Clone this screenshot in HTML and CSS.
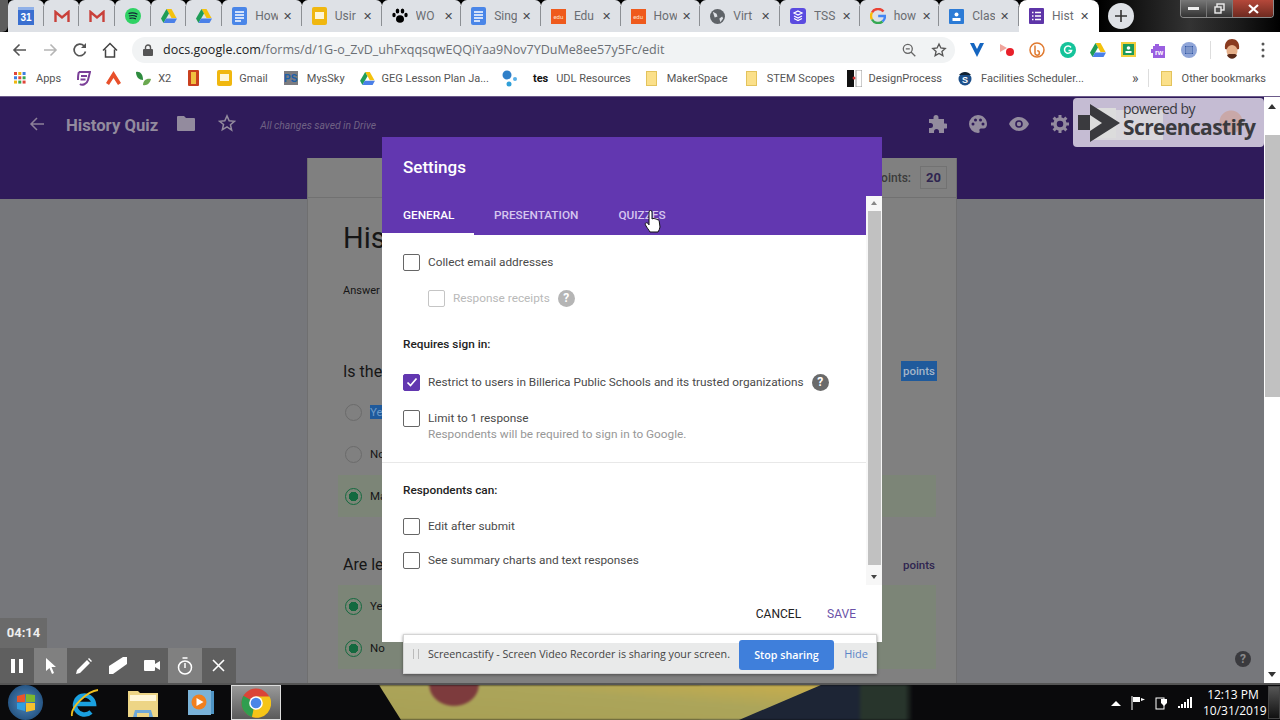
FILE: index.html
```html
<!DOCTYPE html>
<html lang="en">
<head>
    <meta charset="UTF-8">
    <title>History Quiz - Google Forms</title>
    <link rel="stylesheet" href="styles.css">
</head>
<body>
    <div class="tabstrip">
        <div class="strip-edge"></div>
        <div class="tab pinned"><svg width="16" height="18" viewBox="0 0 16 18"><rect width="16" height="18" fill="#3a6fd0"/><rect y="0" width="16" height="3" fill="#8fb0e8"/><text x="8" y="14" class="cal-num">31</text></svg></div>
        <div class="tab pinned"><svg width="16" height="13" viewBox="0 0 16 13"><path d="M1.5 12V2l6.5 5.5L14.500 2v10" fill="none" stroke="#c9403a" stroke-width="2.400"/></svg></div>
        <div class="tab pinned"><svg width="16" height="13" viewBox="0 0 16 13"><path d="M1.5 12V2l6.500 5.500L14.500 2v10" fill="none" stroke="#c9403a" stroke-width="2.400"/></svg></div>
        <div class="tab pinned"><svg width="16" height="16" viewBox="0 0 16 16"><circle cx="8" cy="8" r="8" fill="#2fd264"/><path d="M3.500 5.500c3-1 6-.8 9 .7M4 8c2.600-.8 5.200-.6 7.800.6M4.500 10.400c2.200-.6 4.400-.5 6.400.5" fill="none" stroke="#123" stroke-width="1.200"/></svg></div>
        <div class="tab pinned"><svg class="drive" width="16" height="14" viewBox="0 0 16 14"><path d="M5.500 0h5l5 9h-5z" fill="#f4c20d"/><path d="M5.500 0L0 9.500 2.500 14l5.500-9.500z" fill="#1f9d57"/><path d="M2.500 14h11L16 9.500H5z" fill="#4a80e8"/></svg></div>
        <div class="tab pinned"><svg class="drive" width="16" height="14" viewBox="0 0 16 14"><path d="M5.500 0h5l5 9h-5z" fill="#f4c20d"/><path d="M5.500 0L0 9.500 2.500 14l5.500-9.500z" fill="#1f9d57"/><path d="M2.500 14h11L16 9.500H5z" fill="#4a80e8"/></svg></div>

        <div class="tab"><svg width="15" height="18" viewBox="0 0 15 18"><rect width="15" height="18" rx="2" fill="#4a86e8"/><path d="M3 5h9M3 8h9M3 11h9M3 14h6" stroke="#fff" stroke-width="1.500"/></svg><span class="tab-title">How</span><span class="tab-x">✕</span></div>
        <div class="tab"><svg width="15" height="18" viewBox="0 0 15 18"><rect width="15" height="18" rx="2" fill="#f0b70f"/><rect x="3" y="5" width="9" height="7" fill="#fdf6d8"/></svg><span class="tab-title">Usir</span><span class="tab-x">✕</span></div>
        <div class="tab"><svg width="16" height="16" viewBox="0 0 16 16"><ellipse cx="8" cy="11" rx="4" ry="3.800"/><ellipse cx="2" cy="7" rx="1.700" ry="2.300"/><ellipse cx="5.500" cy="3" rx="1.800" ry="2.600"/><ellipse cx="10.500" cy="3" rx="1.800" ry="2.600"/><ellipse cx="14" cy="7" rx="1.700" ry="2.300"/></svg><span class="tab-title">WO</span><span class="tab-x">✕</span></div>
        <div class="tab"><svg width="15" height="18" viewBox="0 0 15 18"><rect width="15" height="18" rx="2" fill="#4a86e8"/><path d="M3 5h9M3 8h9M3 11h9M3 14h6" stroke="#fff" stroke-width="1.500"/></svg><span class="tab-title">Sing</span><span class="tab-x">✕</span></div>
        <div class="tab"><div class="edu-icon">edu</div><span class="tab-title">Edu</span><span class="tab-x">✕</span></div>
        <div class="tab"><div class="edu-icon">edu</div><span class="tab-title">How</span><span class="tab-x">✕</span></div>
        <div class="tab"><svg width="15" height="15" viewBox="0 0 16 16"><circle cx="8" cy="8" r="8" fill="#5f6368"/><path d="M3 3l4 2 1 3-3 1zM10 10l3-2 1 2-3 4z" fill="#dee1e6"/></svg><span class="tab-title">Virt</span><span class="tab-x">✕</span></div>
        <div class="tab"><svg width="16" height="16" viewBox="0 0 16 16"><rect width="16" height="16" rx="3" fill="#5b4be0"/><path d="M8 3l4 2-4 2-4-2zM4 8l4 2 4-2M4 10.500l4 2 4-2" fill="none" stroke="#fff" stroke-width="1.200"/></svg><span class="tab-title">TSS</span><span class="tab-x">✕</span></div>
        <div class="tab"><svg width="16" height="16" viewBox="0 0 16 16"><path d="M13.500 3.500A7 7 0 0 0 2 4.500" fill="none" stroke="#ea4335" stroke-width="2.400"/><path d="M2 4.500a7 7 0 0 0 0 7" fill="none" stroke="#fbbc05" stroke-width="2.400"/><path d="M2 11.500a7 7 0 0 0 10.500 2" fill="none" stroke="#34a853" stroke-width="2.400"/><path d="M12.500 13.500A7 7 0 0 0 15 8H8.200" fill="none" stroke="#4285f4" stroke-width="2.400"/></svg><span class="tab-title">how</span><span class="tab-x">✕</span></div>
        <div class="tab"><svg width="15" height="15" viewBox="0 0 15 15"><rect width="15" height="15" rx="1" fill="#2c7bd6"/><circle cx="7.500" cy="5.500" r="2" fill="#fff"/><rect x="3.500" y="9" width="8" height="3" fill="#fff"/></svg><span class="tab-title">Clas</span><span class="tab-x">✕</span></div>
        <div class="tab active"><svg width="15" height="16" viewBox="0 0 15 16"><rect width="15" height="16" rx="1" fill="#5e35a8"/><path d="M3 4.500h1.500M6 4.500h6M3 8h1.500M6 8h6M3 11.500h1.500M6 11.500h6" stroke="#fff" stroke-width="1.500"/></svg><span class="tab-title">Hist</span><span class="tab-x">✕</span></div>
        <div class="new-tab"><svg width="12" height="12" viewBox="0 0 12 12"><path d="M6 0v12M0 6h12" stroke="#333" stroke-width="1.600"/></svg></div>
        <div class="window-buttons">
            <div class="win-btn"><svg width="11" height="4" viewBox="0 0 11 4"><rect width="11" height="3" fill="#eee"/></svg></div>
            <div class="win-btn"><svg width="11" height="11" viewBox="0 0 11 11"><rect x="3" y="1" width="7" height="6" fill="none" stroke="#eee" stroke-width="1.400"/><rect x="1" y="4" width="6" height="6" fill="#555" stroke="#eee" stroke-width="1.400"/></svg></div>
            <div class="win-btn win-close"><svg width="11" height="10" viewBox="0 0 11 10"><path d="M1 1l9 8M10 1l-9 8" stroke="#fff" stroke-width="2.200"/></svg></div>
        </div>
    </div>

    <div class="toolbar">
        <svg class="nav-icon" width="18" height="18" viewBox="0 0 18 18"><path d="M15 9H3M8.500 3.500L3 9l5.500 5.500" fill="none" stroke="#555" stroke-width="1.600"/></svg>
        <svg class="nav-icon" width="18" height="18" viewBox="0 0 18 18"><path d="M3 9h12M9.500 3.500L15 9l-5.500 5.500" fill="none" stroke="#b5b5b5" stroke-width="1.600"/></svg>
        <svg class="nav-icon" width="18" height="18" viewBox="0 0 18 18"><path d="M14.500 10.500A5.800 5.800 0 1 1 13 4.800" fill="none" stroke="#555" stroke-width="1.700"/><path d="M15 2v5h-5z" fill="#555"/></svg>
        <svg class="nav-icon" width="18" height="18" viewBox="0 0 18 18"><path d="M2 9.500L9 2.500l7 7M4.500 8.500V16h9V8.500" fill="none" stroke="#444" stroke-width="1.500"/></svg>
        <div class="omnibox">
            <svg width="10" height="12" viewBox="0 0 10 12"><rect y="5" width="10" height="7" rx="1" fill="#555"/><path d="M2.500 5V3.500a2.500 2.500 0 0 1 5 0V5" fill="none" stroke="#555" stroke-width="1.400"/></svg>
            <div class="url"><span class="url-host">docs.google.com</span>/forms/d/1G-o_ZvD_uhFxqqsqwEQQiYaa9Nov7YDuMe8ee57y5Fc/edit</div>
            <svg width="14" height="14" viewBox="0 0 14 14"><circle cx="5.800" cy="5.800" r="4.500" fill="none" stroke="#666" stroke-width="1.300"/><path d="M9 9l4.300 4.300M3.800 5.800h4" stroke="#666" stroke-width="1.300"/></svg>
            <svg class="omni-star" width="16" height="16" viewBox="0 0 24 24"><path d="M12 3l2.800 6 6.500.7-4.900 4.400 1.400 6.400L12 17.200 6.200 20.500l1.400-6.400-4.900-4.400 6.500-.7z" fill="none" stroke="#555" stroke-width="2"/></svg>
        </div>
        <div class="extensions">
            <svg width="14" height="15" viewBox="0 0 14 15"><path d="M0 1l4 0 3 6 3-6 4 0-5 10-2 4-2-4z" fill="#1565c0"/></svg>
            <svg width="16" height="15" viewBox="0 0 16 15"><path d="M1 2l7 4-7 4z" fill="#f0a59c"/><circle cx="11" cy="10" r="4" fill="#e8202a"/></svg>
            <svg width="16" height="16" viewBox="0 0 16 16"><circle cx="8" cy="8" r="7" fill="none" stroke="#e07a30" stroke-width="1.500"/><path d="M6 3.500V11a2.200 2.200 0 1 0 2.200-2.200" fill="none" stroke="#e07a30" stroke-width="1.500"/></svg>
            <svg width="16" height="16" viewBox="0 0 16 16"><circle cx="8" cy="8" r="8" fill="#15c39a"/><path d="M11 5.500a3.600 3.600 0 1 0 .6 3H8.500" fill="none" stroke="#fff" stroke-width="1.500"/></svg>
            <svg class="drive" width="16" height="14" viewBox="0 0 16 14"><path d="M5.500 0h5l5 9h-5z" fill="#f4c20d"/><path d="M5.500 0L0 9.500 2.500 14l5.500-9.500z" fill="#1f9d57"/><path d="M2.500 14h11L16 9.500H5z" fill="#4a80e8"/></svg>
            <svg width="15" height="15" viewBox="0 0 15 15"><rect width="15" height="15" fill="#f3cf3e"/><rect x="2" y="2" width="11" height="11" fill="#1c9a5b"/><circle cx="7.500" cy="6" r="1.800" fill="#fff"/><rect x="4.500" y="9" width="6" height="2" fill="#fff"/></svg>
            <svg width="16" height="16" viewBox="0 0 16 16"><path d="M5 2h4v2h6v12H3V11H1V7h2V4h2z" fill="#9a5fe0"/><text x="9" y="13" class="rw-text">rw</text></svg>
            <svg width="16" height="16" viewBox="0 0 16 16"><circle cx="8" cy="8" r="8" fill="#8fa5d8"/><rect x="4" y="4" width="8" height="8" fill="#2f55a4"/><path d="M6 4v8M8 4v8M10 4v8M4 6h8M4 8h8M4 10h8" stroke="#cdd8f0" stroke-width=".6"/></svg>
            <div class="ext-sep"></div>
            <svg class="avatar" width="18" height="21" viewBox="0 0 18 21"><path d="M2 10C1 3 5 0 9 0s8 3 7 10c-1 1-13 1-14 0z" fill="#8a3a1e"/><ellipse cx="9" cy="12" rx="5.500" ry="6" fill="#e6b08a"/><path d="M4 16c2 5 8 5 10 0l-2-1H6z" fill="#5a2a18"/></svg>
            <svg class="menu-dots" width="4" height="16" viewBox="0 0 4 16"><circle cx="2" cy="2" r="1.500" fill="#555"/><circle cx="2" cy="8" r="1.500" fill="#555"/><circle cx="2" cy="14" r="1.500" fill="#555"/></svg>
        </div>
    </div>

    <div class="bookmarks">
        <div class="bm bm-apps"><svg width="12" height="12" viewBox="0 0 14 14"><rect width="3.500" height="3.500" fill="#e0463a"/><rect x="5" width="3.500" height="3.500" fill="#f0b70f"/><rect x="10" width="3.500" height="3.500" fill="#3a7ee0"/><rect y="5" width="3.500" height="3.500" fill="#3a7ee0"/><rect x="5" y="5" width="3.500" height="3.500" fill="#e0463a"/><rect x="10" y="5" width="3.500" height="3.500" fill="#34a853"/><rect y="10" width="3.500" height="3.500" fill="#f0b70f"/><rect x="5" y="10" width="3.500" height="3.500" fill="#34a853"/><rect x="10" y="10" width="3.500" height="3.500" fill="#e0463a"/></svg>Apps</div>
        <div class="bm bm-s1"><svg width="15" height="15" viewBox="0 0 15 15"><path d="M3 1h11l-2 8c-1 4-6 6-8 4M2 9c0-3 0-6 1-8M5 5h6M4.500 8.500h5" fill="none" stroke="#7b3f98" stroke-width="2"/></svg></div>
        <div class="bm bm-s2"><svg width="15" height="14" viewBox="0 0 15 14"><path d="M7.500 0L15 12l-3 2-4.500-7L3 14l-3-2z" fill="#e8502a"/></svg></div>
        <div class="bm bm-x2"><svg width="15" height="16" viewBox="0 0 15 16"><path d="M0 2c4-1 7 2 7 8C3 10 0 7 0 2z" fill="#2e8b3f"/><path d="M7 15c0-4 3-7 8-6-1 4-4 7-8 6z" fill="#6aa84f"/></svg>X2</div>
        <div class="bm bm-s3"><svg width="11" height="16" viewBox="0 0 11 16"><rect width="11" height="16" rx="1" fill="#c9401f"/><rect x="3" y="2" width="5" height="12" fill="#f0c040"/></svg></div>
        <div class="bm bm-gmail"><svg width="15" height="16" viewBox="0 0 15 16"><rect width="15" height="16" rx="2" fill="#f0b70f"/><rect x="3" y="4" width="9" height="7" fill="#fdf6d8"/></svg>Gmail</div>
        <div class="bm bm-mys"><svg width="14" height="14" viewBox="0 0 14 14"><rect width="14" height="14" fill="#7c7c80"/><text x="0" y="11" class="ps-text">PS</text></svg>MysSky</div>
        <div class="bm bm-geg"><svg class="drive" width="15" height="13" viewBox="0 0 16 14"><path d="M5.500 0h5l5 9h-5z" fill="#f4c20d"/><path d="M5.500 0L0 9.500 2.500 14l5.500-9.500z" fill="#1f9d57"/><path d="M2.500 14h11L16 9.500H5z" fill="#4a80e8"/></svg>GEG Lesson Plan Ja...</div>
        <div class="bm bm-dots"><svg width="16" height="17" viewBox="0 0 16 17"><circle cx="5" cy="5" r="4.500" fill="#2f7fc8"/><circle cx="13" cy="9" r="2" fill="#58b0e8"/><circle cx="7" cy="14" r="2.500" fill="#2f9fd8"/></svg></div>
        <div class="bm bm-udl"><span class="tes-text">tes</span>UDL Resources</div>
        <div class="bm bm-maker"><span class="folder"></span>MakerSpace</div>
        <div class="bm bm-stem"><span class="folder"></span>STEM Scopes</div>
        <div class="bm bm-design"><svg width="15" height="17" viewBox="0 0 15 17"><rect width="7" height="17" fill="#111"/><rect x="9" width="6" height="17" fill="#fff" stroke="#999"/><circle cx="7" cy="8" r="1.500" fill="#c33"/></svg>DesignProcess</div>
        <div class="bm bm-fac"><svg width="14" height="15" viewBox="0 0 14 15"><circle cx="7" cy="8" r="6.500" fill="#1c4f8a"/><path d="M1 4c3-4 9-4 12 0z" fill="#123"/><text x="7" y="12" class="fs-text">S</text></svg>Facilities Scheduler...</div>
        <div class="bm-more">»</div>
        <div class="bm-sep"></div>
        <div class="bm bm-other"><span class="folder"></span>Other bookmarks</div>
    </div>

    <main class="page">
        <div class="form-area">
            <div class="form-header">
                <div class="header-left">
                    <svg width="16" height="16" viewBox="0 0 16 16"><path d="M15 8H2M8 2L2 8l6 6" fill="none" stroke="#8d8199" stroke-width="1.500"/></svg>
                    <div class="form-title">History Quiz</div>
                    <svg width="18" height="15" viewBox="0 0 18 15"><path d="M1 0h6l2 2h8a1 1 0 0 1 1 1v11a1 1 0 0 1-1 1H1a1 1 0 0 1-1-1V1a1 1 0 0 1 1-1z" fill="#938b9e"/></svg>
                    <svg class="head-star" width="18" height="18" viewBox="0 0 24 24"><path d="M12 2.500l2.900 6.500 7 .7-5.300 4.700 1.600 7L12 17.200l-6.200 3.700 1.600-7L2.100 9.700l7-.7z" fill="none" stroke="#938b9e" stroke-width="2"/></svg>
                    <div class="saved-note">All changes saved in Drive</div>
                </div>
                <div class="header-right">
                    <svg width="18" height="18" viewBox="0 0 18 18"><path d="M7 0a2.500 2.500 0 0 1 2.500 2.500V4H15v4.500h1.500a2.500 2.500 0 0 1 0 5H15V18H10v-1.500a2.500 2.500 0 0 0-5 0V18H0v-5h1.500a2.500 2.500 0 0 0 0-5H0V4h4.500V2.500A2.500 2.500 0 0 1 7 0z" fill="#938b9e"/></svg>
                    <svg width="18" height="18" viewBox="0 0 18 18"><path d="M9 0a9 9 0 1 0 0 18c1.500 0 2-1 1.500-2-.5-1.200.2-2.500 1.500-2.500h2.500C16.800 13.500 18 11.500 18 9c0-5-4-9-9-9z" fill="#938b9e"/><circle cx="4" cy="9" r="1.500" fill="#2f1b5a"/><circle cx="6.500" cy="5" r="1.500" fill="#2f1b5a"/><circle cx="11.500" cy="5" r="1.500" fill="#2f1b5a"/><circle cx="14" cy="9" r="1.500" fill="#2f1b5a"/></svg>
                    <svg width="20" height="14" viewBox="0 0 20 14"><path d="M10 0C5.500 0 2 3 0 7c2 4 5.500 7 10 7s8-3 10-7c-2-4-5.500-7-10-7z" fill="#938b9e"/><circle cx="10" cy="7" r="3.800" fill="#2f1b5a"/><circle cx="10" cy="7" r="2.200" fill="#938b9e"/></svg>
                    <svg width="18" height="18" viewBox="0 0 18 18"><circle cx="9" cy="9" r="5" fill="none" stroke="#938b9e" stroke-width="3.500"/><path d="M9 0v4M9 14v4M0 9h4M14 9h4M2.600 2.600l2.900 2.900M12.500 12.500l2.900 2.900M2.600 15.400l2.900-2.900M12.500 5.500l2.900-2.900" stroke="#938b9e" stroke-width="3"/></svg>
                </div>
            </div>
            <div class="form-card">
                <div class="card-top">
                    <span class="total-label">oints:</span>
                    <span class="total-box">20</span>
                </div>
                <div class="card-body">
                    <h1 class="quiz-title">His</h1>
                    <div class="quiz-desc">Answer</div>
                    <div class="question-head"><span>Is the</span><span class="points selected">points</span></div>
                    <div class="choice"><span class="radio"></span><span class="selected">Ye</span></div>
                    <div class="choice"><span class="radio"></span><span>No</span></div>
                    <div class="choice correct"><span class="radio on"></span><span>Ma</span></div>
                    <div class="question-head second"><span>Are le</span><span class="points">points</span></div>
                    <div class="choice correct"><span class="radio on"></span><span>Ye</span></div>
                    <div class="choice correct"><span class="radio on"></span><span>No</span></div>
                </div>
            </div>
            <div class="help-dot">?</div>
        </div>
        <div class="page-scroll">
            <div class="scroll-up"></div>
            <div class="scroll-thumb"></div>
            <div class="scroll-down"></div>
        </div>

        <div class="watermark">
            <svg width="42" height="38" viewBox="0 0 42 38"><rect x="0" y="11" width="12" height="15" fill="#3a3a3e"/><rect x="12" y="4" width="26" height="30" fill="#dcdcdc"/><path d="M12 0l30 19-30 19V27l12-8-12-8z" fill="#3a3a3e"/></svg>
            <div class="wm-text">
                <div class="wm-small">powered by</div>
                <div class="wm-big">Screencastify</div>
            </div>
        </div>

        <div class="settings-modal">
            <div class="modal-head">
                <div class="modal-title">Settings</div>
            </div>
            <div class="modal-scrollwrap">
                <div class="modal-content">
                    <div class="modal-tabs">
                        <div class="modal-tab current">GENERAL</div>
                        <div class="modal-tab">PRESENTATION</div>
                        <div class="modal-tab">QUIZZES</div>
                    </div>
                    <div class="modal-rows">
                        <label class="row row-first"><span class="check"></span>Collect email addresses</label>
                        <label class="row row-sub disabled"><span class="check"></span>Response receipts<span class="help light">?</span></label>
                        <div class="row-heading first-heading">Requires sign in:</div>
                        <label class="row row-restrict"><span class="check checked"><svg width="14" height="14" viewBox="0 0 14 14"><path d="M2.500 7.500l3 3 6-7" fill="none" stroke="#fff" stroke-width="1.700"/></svg></span>Restrict to users in Billerica Public Schools and its trusted organizations<span class="help">?</span></label>
                        <label class="row row-limit"><span class="check"></span>Limit to 1 response</label>
                        <div class="row-note">Respondents will be required to sign in to Google.</div>
                        <div class="modal-divider"></div>
                        <div class="row-heading">Respondents can:</div>
                        <label class="row row-edit"><span class="check"></span>Edit after submit</label>
                        <label class="row row-see"><span class="check"></span>See summary charts and text responses</label>
                    </div>
                </div>
                <div class="modal-scroll">
                    <div class="mini-up"></div>
                    <div class="mini-thumb"></div>
                    <div class="mini-down"></div>
                </div>
            </div>
            <div class="modal-actions">
                <span class="act-cancel">CANCEL</span>
                <span class="act-save">SAVE</span>
            </div>
        </div>

        <svg class="cursor-hand" width="18" height="24" viewBox="0 0 18 24"><path d="M5 2a1.500 1.500 0 0 1 3 0v7l1-.5c1-.3 1.500 0 2 .5 1-.3 1.500 0 2 .7 1-.2 2 .3 2.200 1.300L16 17c-.3 2-1 3.500-2 5H6c-1-2-3-4-4.500-7-.5-1-.3-2 .7-2.200.8-.2 1.800.5 2.800 2z" fill="#fff" stroke="#111" stroke-width="1"/></svg>

        <div class="rec-tools">
            <div class="rec-time">04:14</div>
            <div class="rec-buttons">
                <div class="rec-btn"><svg width="12" height="14" viewBox="0 0 12 14"><rect width="4" height="14" fill="#fff"/><rect x="8" width="4" height="14" fill="#fff"/></svg></div>
                <div class="rec-btn lit"><svg width="12" height="16" viewBox="0 0 12 16"><path d="M1 0l10 9H6.500l2.500 6-2 1-2.500-6L1 13z" fill="#fff"/></svg></div>
                <div class="rec-btn"><svg width="16" height="16" viewBox="0 0 16 16"><path d="M0 16l1-4L11 2l3 3L4 15zM12 1l1-1 3 3-1 1z" fill="#fff"/></svg></div>
                <div class="rec-btn"><svg width="18" height="17" viewBox="0 0 18 17"><path d="M0 9L14 0h4v7L4 17H0z" fill="#fff"/></svg></div>
                <div class="rec-btn"><svg width="16" height="11" viewBox="0 0 16 11"><rect width="11" height="11" rx="1" fill="#fff"/><path d="M11 4l5-3v9l-5-3z" fill="#fff"/></svg></div>
                <div class="rec-btn lit"><svg width="16" height="18" viewBox="0 0 16 18"><circle cx="8" cy="10.500" r="6.500" fill="none" stroke="#fff" stroke-width="1.500"/><path d="M5.500 1h5M8 6v5" stroke="#fff" stroke-width="1.500"/></svg></div>
                <div class="rec-btn"><svg width="13" height="13" viewBox="0 0 13 13"><path d="M1 1l11 11M12 1L1 12" stroke="#fff" stroke-width="1.600"/></svg></div>
            </div>
        </div>

        <div class="share-bar">
            <span class="grip"></span>
            <span class="share-msg">Screencastify - Screen Video Recorder is sharing your screen.</span>
            <span class="stop-btn">Stop sharing</span>
            <span class="hide-link">Hide</span>
        </div>
    </main>

    <footer class="taskbar">
        <div class="wall-dark"></div>
        <div class="wall-yellow"></div>
        <div class="start-orb"><svg width="24" height="24" viewBox="0 0 24 24"><path d="M3 5l8-2v8H3z" fill="#e8552a"/><path d="M12 3l9 1v7h-9z" fill="#7cb82f"/><path d="M3 12h8v8l-8-2z" fill="#2f9fe0"/><path d="M12 12h9v7l-9 2z" fill="#f5c12e"/></svg></div>
        <div class="task-app"><svg width="30" height="32" viewBox="0 0 30 32"><path d="M7 17h17a9.500 9.500 0 1 0-3 8" fill="none" stroke="#1aa0e0" stroke-width="4.500"/><path d="M2 29C0 20 18 4 28 3" fill="none" stroke="#f0c020" stroke-width="1.800"/></svg></div>
        <div class="task-app"><svg width="30" height="28" viewBox="0 0 30 28"><path d="M0 2h10l2 2h18v24H0z" fill="#edd586"/><rect x="2" y="6" width="26" height="6" fill="#fff7d8"/><path d="M5 28l2-7h16l2 7h-4v-4H9v4z" fill="#6fa8d8"/></svg></div>
        <div class="task-app"><svg width="26" height="25" viewBox="0 0 26 25"><rect x="4" y="1" width="22" height="23" fill="#4f94c4"/><rect width="23" height="25" fill="#7ab2d8"/><circle cx="11" cy="12" r="7.500" fill="#f07f1f"/><path d="M8.500 8v8l7-4z" fill="#fff"/></svg></div>
        <div class="task-app current-app"><svg width="30" height="30" viewBox="0 0 30 30"><circle cx="15" cy="15" r="14.500" fill="#db4437"/><path d="M15 15L2.400 7.800A14.500 14.500 0 0 0 11 29z" fill="#2f9e4f"/><path d="M15 8.500h13.500A14.500 14.500 0 0 1 11 29z" fill="#f5c518"/><circle cx="15" cy="15" r="6.800" fill="#fff"/><circle cx="15" cy="15" r="5.300" fill="#4a86e8"/></svg></div>
        <div class="tray">
            <svg width="10" height="6" viewBox="0 0 10 6"><path d="M0 6l5-5 5 5z" fill="#fff"/></svg>
            <svg width="14" height="14" viewBox="0 0 14 14"><path d="M1 0v14" stroke="#fff" stroke-width="1"/><path d="M2 1h7v5H2zM10 2l4 1.500L10 5z" fill="#fff"/></svg>
            <svg width="13" height="14" viewBox="0 0 13 14"><rect x="1" y="2" width="8" height="11" fill="none" stroke="#fff"/><path d="M6 3h6v4l-3 3-3-3z" fill="#fff"/></svg>
            <svg width="14" height="11" viewBox="0 0 14 11"><path d="M0 9h2v2H0zM3 7h2v4H3zM6 5h2v6H6zM9 2h2v9H9zM12 0h2v11h-2z" fill="#fff"/></svg>
            <div class="clock"><div>12:13 PM</div><div>10/31/2019</div></div>
            <div class="show-desktop"></div>
        </div>
    </footer>
</body>
</html>
```

FILE: styles.css
```css
* {
    box-sizing: border-box;
}
html, body {
    margin: 0;
    padding: 0;
    width: 1280px;
    height: 720px;
    overflow: hidden;
}
body {
    display: flex;
    flex-direction: column;
    font-family: "Open Sans", "Liberation Sans", sans-serif;
    background: #000;
}

/* tab strip */
.tabstrip {
    height: 32px;
    display: flex;
    align-items: stretch;
    background: linear-gradient(to right, #000 1100px, #333 1190px, #1a1a1a 1240px, #000 1280px);
    flex: none;
    position: relative;
}
.strip-edge {
    width: 8px;
    background: #5d5d5d;
    border-radius: 0 0 6px 0;
}
.tab {
    width: 79.7px;
    background: linear-gradient(#8c8f94, #8c8f94) right 6px / 1px 20px no-repeat, #dee1e6;
    display: flex;
    align-items: center;
    padding-left: 10px;
    border-radius: 6px 6px 0 0;
    font-family: Roboto, sans-serif;
    font-size: 12px;
    color: #6a6d72;
}
.tab.pinned {
    width: 35.7px;
    padding-left: 0;
    justify-content: center;
}
.tab.active {
    background: #fff;
    border-radius: 8px 8px 0 0;
    width: 80px;
}
.tab-title {
    margin-left: 8px;
    width: 23px;
    overflow: hidden;
    white-space: nowrap;
    flex: none;
}
.tab-x {
    margin-left: 5px;
    font-size: 11px;
    color: #45484d;
    flex: none;
}
.cal-num {
    font: bold 10px "Liberation Sans", sans-serif;
    fill: #fff;
    text-anchor: middle;
}
.edu-icon {
    width: 15px;
    height: 15px;
    background: #ef5a1c;
    color: #fde0c8;
    font-size: 6px;
    line-height: 15px;
    text-align: center;
    flex: none;
}
.new-tab {
    width: 26px;
    height: 26px;
    border-radius: 50%;
    background: #dee1e6;
    margin: 3px 0 0 9px;
    display: flex;
    align-items: center;
    justify-content: center;
}
.window-buttons {
    display: flex;
    margin-left: auto;
    margin-right: 6px;
    height: 18px;
    border: 1px solid #8a8a8a;
    border-top: none;
    border-radius: 0 0 4px 4px;
    overflow: hidden;
    width: 94px;
}
.win-btn {
    width: 26px;
    display: flex;
    align-items: center;
    justify-content: center;
    background: linear-gradient(#777, #333);
    border-right: 1px solid #777;
}
.win-close {
    flex: 1;
    border: none;
    background: linear-gradient(#b5483a, #6e2a20);
}

/* address bar */
.toolbar {
    height: 33px;
    background: #fff;
    display: flex;
    align-items: center;
    flex: none;
    padding: 2px 0 0 11px;
}
.nav-icon {
    margin-right: 12px;
    flex: none;
}
.toolbar .nav-icon:nth-child(4) {
    margin-right: 13px;
}
.omnibox {
    width: 823px;
    height: 26px;
    border-radius: 13px;
    background: #f1f3f4;
    display: flex;
    align-items: center;
    padding: 0 7px 0 11px;
    flex: none;
}
.url {
    margin-left: 10px;
    font-size: 12.55px;
    color: #6b6f74;
    white-space: nowrap;
    width: 739px;
    flex: none;
}
.url-host {
    color: #222;
}
.omni-star {
    margin-left: 15px;
}
.extensions {
    display: flex;
    align-items: center;
    gap: 14.5px;
    margin-left: 15px;
}
.ext-sep {
    width: 1px;
    height: 18px;
    background: #ddd;
    margin: 0 -1px 0 -1px;
}
.avatar {
    margin-left: -2px;
}
.menu-dots {
    margin-left: 6px;
}
.rw-text {
    font: bold 7px "Liberation Sans", sans-serif;
    fill: #fff;
    text-anchor: middle;
}

/* bookmarks */
.bookmarks {
    height: 31px;
    background: #fff;
    display: flex;
    align-items: center;
    flex: none;
    font-family: Roboto, sans-serif;
    font-size: 11px;
    color: #555;
    padding: 0 14px 5px 14px;
    white-space: nowrap;
}
.bm {
    display: flex;
    align-items: center;
    gap: 8px;
    flex: none;
}
.bm-apps { gap: 10px; }
.bm-s1 { margin-left: 15px; }
.bm-s2 { margin-left: 15px; }
.bm-x2 { margin-left: 15px; gap: 7px; }
.bm-s3 { margin-left: 17px; }
.bm-gmail { margin-left: 18px; gap: 7px; }
.bm-mys { margin-left: 16px; gap: 9px; }
.bm-geg { margin-left: 15px; gap: 7px; }
.bm-dots { margin-left: 13px; }
.bm-udl { margin-left: 15px; }
.bm-maker { margin-left: 15px; gap: 10px; }
.bm-stem { margin-left: 18px; gap: 10px; }
.bm-design { margin-left: 12px; gap: 7px; }
.bm-fac { margin-left: 16px; gap: 9px; }
.bm-other { margin-left: 12px; gap: 10px; }
.bm-more {
    margin-left: auto;
    font-size: 14px;
    color: #555;
}
.bm-sep {
    width: 1px;
    height: 18px;
    background: #ddd;
    margin-left: 9px;
}
.folder {
    width: 11px;
    height: 15px;
    background: #fbe08a;
    border: 1px solid #e3c35c;
    flex: none;
}
.ps-text {
    font: bold 10px "Liberation Sans", sans-serif;
    fill: #1c5fa8;
}
.fs-text {
    font: bold 9px "Liberation Sans", sans-serif;
    fill: #fff;
    text-anchor: middle;
}
.tes-text {
    font-weight: bold;
    color: #111;
    font-size: 11px;
}

/* page behind the dialog */
.page {
    height: 587px;
    display: flex;
    flex: none;
    position: relative;
    overflow: hidden;
    border-top: 1px solid #6c5b8a;
}
.form-area {
    width: 1264px;
    background: linear-gradient(#2f1b5a 102px, #76777b 102px);
    position: relative;
    flex: none;
}
.form-header {
    display: flex;
    justify-content: space-between;
    height: 61px;
    padding: 9px 195px 0 29px;
}
.header-left {
    display: flex;
    align-items: center;
    height: 36px;
}
.form-title {
    font-family: Roboto, sans-serif;
    font-size: 16.7px;
    font-weight: 700;
    color: #938b9e;
    margin: 2px 0 0 21px;
}
.header-left svg:nth-of-type(2) {
    margin-left: 19px;
    margin-top: -1px;
}
.head-star {
    margin-left: 23px;
    margin-top: -3px;
}
.saved-note {
    font-family: Roboto, sans-serif;
    font-size: 10.3px;
    font-style: italic;
    color: #6f6284;
    margin-left: 24px;
    margin-top: 2px;
}
.header-right {
    display: flex;
    align-items: center;
    gap: 22px;
    height: 36px;
}
.form-card {
    width: 650px;
    height: 526px;
    margin-left: 307px;
    background: #808080;
    border-right: 1px solid #6f6f70;
    border-left: 1px solid #6f6f70;
    font-family: Roboto, sans-serif;
    color: #161616;
}
.card-top {
    height: 40px;
    border-bottom: 1px solid #717171;
    display: flex;
    justify-content: flex-end;
    align-items: center;
    padding-right: 9px;
    font-size: 12px;
    font-weight: 500;
    color: #3b3b3b;
}
.total-box {
    border: 1px solid #727272;
    width: 27px;
    height: 23px;
    line-height: 21px;
    text-align: center;
    margin-left: 9px;
    font-size: 13px;
    font-weight: 700;
    color: #2f2550;
}
.card-body {
    padding: 0 20px 0 35px;
}
.quiz-title {
    margin: 22px 0 0;
    font-size: 29px;
    font-weight: 400;
    line-height: 36px;
}
.quiz-desc {
    font-size: 11px;
    margin-top: 28px;
    line-height: 14px;
}
.question-head {
    display: flex;
    justify-content: space-between;
    font-size: 16px;
    line-height: 20px;
    margin-top: 64px;
    align-items: center;
}
.question-head.second {
    margin-top: 38px;
    margin-bottom: 10px;
}
.points {
    font-size: 11.5px;
    font-weight: 500;
    color: #2f2550;
    margin-right: -1px;
    padding: 0 2px;
}
.points.selected {
    color: #a3b5c8;
    position: relative;
    top: -1px;
}
.selected {
    background: #1f5a9c;
    color: #6e9ac8;
}
.choice {
    display: flex;
    align-items: center;
    height: 42px;
    font-size: 11.5px;
    gap: 8px;
    padding-left: 2px;
}
.question-head + .choice {
    margin-top: 9px;
}
.question-head.second + .choice {
    margin-top: 10px;
}
.choice.correct {
    background: #7c8577;
    margin-left: -5px;
    padding-left: 7px;
}
.radio {
    width: 17px;
    height: 17px;
    border: 1.5px solid #6b6b6b;
    border-radius: 50%;
    flex: none;
}
.radio.on {
    border-color: #14693f;
    background: radial-gradient(circle, #14693f 4.5px, transparent 5px);
}
.help-dot {
    position: absolute;
    left: 1235px;
    top: 554px;
    width: 16px;
    height: 16px;
    border-radius: 50%;
    background: #3a3a3e;
    color: #8b8b8b;
    font-family: Roboto, sans-serif;
    font-size: 12px;
    font-weight: 700;
    line-height: 16px;
    text-align: center;
}
.page-scroll {
    width: 16px;
    background: #fff;
    display: flex;
    flex-direction: column;
    align-items: center;
    flex: none;
}
.scroll-up {
    width: 0;
    height: 0;
    border: 4px solid transparent;
    border-top: none;
    border-bottom: 5px solid #333;
    margin-top: 7px;
}
.scroll-thumb {
    width: 15px;
    height: 262px;
    background: #c1c1c1;
    margin-top: 26px;
}
.scroll-down {
    width: 0;
    height: 0;
    border: 4px solid transparent;
    border-bottom: none;
    border-top: 5px solid #333;
    margin-top: auto;
    margin-bottom: 6px;
}

/* things laid over the page */
.watermark {
    position: absolute;
    left: 1073px;
    top: 1px;
    width: 191px;
    height: 49px;
    background:
        linear-gradient(#d9d7dc, #d9d7dc) 17px 12px / 73px 30px no-repeat,
        radial-gradient(circle at 158px 24px, #c9a8a8 11px, transparent 12px),
        #c5bcd3;
    border-radius: 4px;
    display: flex;
    align-items: center;
    padding-left: 5px;
    color: #3a3a3e;
    font-family: "Open Sans", sans-serif;
}
.wm-text {
    margin-left: 3px;
    padding-bottom: 6px;
}
.wm-small {
    font-size: 14px;
    letter-spacing: -0.5px;
    line-height: 15px;
}
.wm-big {
    font-size: 21px;
    font-weight: 700;
    letter-spacing: -0.6px;
    line-height: 22px;
}
.settings-modal {
    position: absolute;
    left: 382px;
    top: 40px;
    width: 500px;
    height: 505px;
    background: #fff;
    font-family: Roboto, sans-serif;
    display: flex;
    flex-direction: column;
}
.modal-head {
    height: 59px;
    background: #6237b0;
    padding: 20px 21px 0;
    flex: none;
}
.modal-title {
    font-size: 17px;
    font-weight: 500;
    color: #fff;
}
.modal-scrollwrap {
    display: flex;
    height: 389px;
    flex: none;
}
.modal-content {
    width: 484px;
    flex: none;
}
.modal-tabs {
    height: 39px;
    background: #6237b0;
    display: flex;
    font-size: 11.8px;
    font-weight: 500;
    color: #d6c6ef;
    align-items: flex-start;
}
.modal-tab {
    padding: 12px 0 0;
    height: 39px;
    margin-left: 40px;
}
.modal-tab.current {
    color: #fff;
    width: 92px;
    margin-left: 0;
    padding-left: 21px;
    border-bottom: 2px solid #fff;
}
.modal-tab:nth-child(2) {
    margin-left: 20px;
}
.modal-rows {
    font-size: 11.8px;
    color: #4a4a4a;
}
.row {
    display: flex;
    align-items: center;
    padding-left: 21px;
    height: 18px;
}
.row-first {
    margin-top: 18px;
}
.row-sub {
    margin-top: 18px;
    padding-left: 46px;
}
.row-restrict {
    margin-top: 21px;
}
.row-limit {
    margin-top: 18px;
}
.row-edit {
    margin-top: 19px;
}
.row-see {
    margin-top: 16px;
}
.check {
    width: 17px;
    height: 17px;
    border: 1.5px solid #666;
    border-radius: 2px;
    margin-right: 8px;
    flex: none;
}
.check.checked {
    background: #6237b0;
    border-color: #6237b0;
    display: flex;
    align-items: center;
    justify-content: center;
}
.disabled {
    color: #b9b9b9;
}
.disabled .check {
    border-color: #c5c5c5;
}
.help {
    width: 17px;
    height: 17px;
    border-radius: 50%;
    background: #6a6a6a;
    color: #fff;
    font-size: 12px;
    font-weight: 700;
    line-height: 17px;
    text-align: center;
    margin-left: 8px;
    flex: none;
}
.help.light {
    background: #b5b5b5;
}
.row-heading {
    font-weight: 500;
    color: #222;
    padding-left: 21px;
    line-height: 16px;
    margin-top: 19px;
}
.first-heading {
    margin-top: 29px;
}
.row-note {
    padding-left: 46px;
    color: #979797;
    line-height: 16px;
    margin-top: -1px;
}
.modal-divider {
    height: 1px;
    background: #e8e8e8;
    margin-top: 20px;
}
.modal-scroll {
    width: 16px;
    display: flex;
    flex-direction: column;
    align-items: center;
    background: #f7f7f7;
    flex: none;
}
.mini-up {
    width: 0;
    height: 0;
    border: 3px solid transparent;
    border-top: none;
    border-bottom: 4px solid #888;
    margin-top: 5px;
}
.mini-thumb {
    width: 13px;
    height: 354px;
    background: #c1c1c1;
    margin-top: 6px;
}
.mini-down {
    width: 0;
    height: 0;
    border: 3px solid transparent;
    border-bottom: none;
    border-top: 4px solid #444;
    margin-top: auto;
    margin-bottom: 6px;
}
.modal-actions {
    display: flex;
    justify-content: flex-end;
    gap: 26px;
    padding: 21px 26px 0 0;
    font-size: 12px;
    line-height: 16px;
}
.act-cancel {
    color: #222;
}
.act-save {
    color: #6a52a8;
}
.cursor-hand {
    position: absolute;
    left: 644px;
    top: 113px;
}
.rec-tools {
    position: absolute;
    left: 0;
    bottom: 0;
    font-family: Roboto, sans-serif;
}
.rec-time {
    width: 47px;
    height: 30px;
    background: #6a6a6a;
    color: #eee;
    font-size: 13px;
    font-weight: 700;
    line-height: 30px;
    text-align: center;
}
.rec-buttons {
    display: flex;
    height: 35px;
    background: #5f5f5f;
    width: 236px;
}
.rec-btn {
    width: 33.7px;
    display: flex;
    align-items: center;
    justify-content: center;
    flex: none;
}
.rec-btn.lit {
    background: #808080;
}
.share-bar {
    position: absolute;
    left: 403px;
    top: 537px;
    width: 474px;
    height: 40px;
    background: linear-gradient(#fff 8px, #e9eaea 8px);
    border: 1px solid #d5d5d5;
    box-shadow: 0 1px 3px rgba(0, 0, 0, 0.4);
    display: flex;
    align-items: center;
    font-family: "Open Sans", sans-serif;
    font-size: 10.7px;
    color: #444;
    padding-left: 9px;
}
.grip {
    width: 6px;
    height: 10px;
    border-left: 1px solid #bbb;
    border-right: 1px solid #bbb;
}
.share-msg {
    margin-left: 9px;
    white-space: nowrap;
}
.stop-btn {
    position: absolute;
    left: 335px;
    top: 5px;
    width: 95px;
    height: 30px;
    background: #3f7fdb;
    border-radius: 3px;
    color: #fff;
    line-height: 30px;
    text-align: center;
    font-weight: 600;
}
.hide-link {
    position: absolute;
    right: 8px;
    top: 11px;
    font-size: 11px;
    color: #5b85c8;
}

/* windows taskbar */
.taskbar {
    height: 37px;
    flex: none;
    display: flex;
    align-items: center;
    position: relative;
    overflow: hidden;
    background: #0a0a0c;
    border-top: 2px solid #555;
    color: #fff;
}
.wall-dark {
    position: absolute;
    left: 700px;
    top: 0;
    width: 213px;
    height: 35px;
    background: linear-gradient(to right, #1d2535 0, #1d2535 158px, #28352c 162px, #28352c 205px, #0a0a0c 213px);
    filter: blur(1px);
}
.wall-yellow {
    position: absolute;
    left: 379px;
    top: 0;
    width: 442px;
    height: 35px;
    background:
        radial-gradient(ellipse 26px 22px at 75px 0, #7d3b3d 90%, transparent 100%),
        linear-gradient(to bottom left, #c9ae4c 0, #aca55a 40%, #a8a055 100%);
    clip-path: polygon(0 0, 100% 0, 360px 100%, 22px 100%);
    filter: blur(1px);
}
.start-orb {
    width: 35px;
    height: 35px;
    margin-left: 8px;
    border-radius: 50%;
    background: radial-gradient(circle, #4f8ac0, #163f6a);
    display: flex;
    align-items: center;
    justify-content: center;
    flex: none;
}
.task-app {
    width: 50px;
    height: 35px;
    margin-left: 8px;
    display: flex;
    align-items: center;
    justify-content: center;
    flex: none;
}
.start-orb + .task-app {
    margin-left: 17px;
}
.current-app {
    background: linear-gradient(#999, #5a5a5a);
    border: 1px solid #ddd;
    margin-left: 5px;
}
.tray {
    margin-left: auto;
    display: flex;
    align-items: center;
    gap: 10px;
    position: relative;
    height: 35px;
}
.clock {
    font-family: "Open Sans", sans-serif;
    font-size: 12px;
    line-height: 16px;
    text-align: center;
    width: 60px;
    margin-left: 1px;
}
.show-desktop {
    width: 12px;
    height: 33px;
    border: 1px solid #444;
    background: linear-gradient(#555, #111);
    margin-left: -5px;
}
```
